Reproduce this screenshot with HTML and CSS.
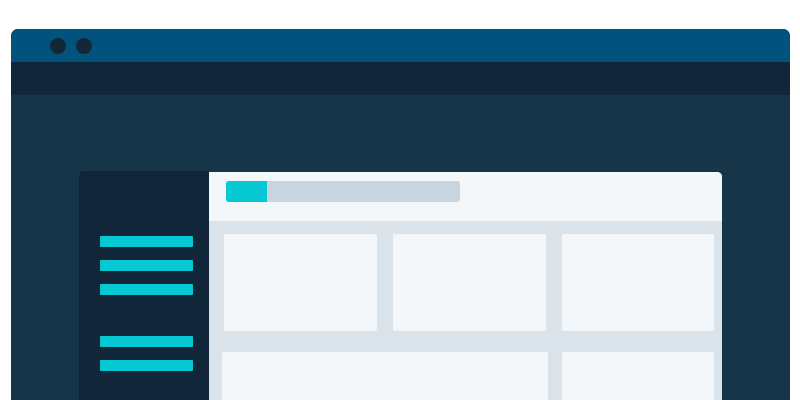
FILE: index.html
```html
<!DOCTYPE html>
<html>
<head>
<meta charset="utf-8">
<link rel="stylesheet" href="styles.css">
</head>
<body>
<div class="window">
  <div class="titlebar">
    <span class="dot"></span>
    <span class="dot"></span>
  </div>
  <div class="navbar"></div>
  <div class="stage">
    <div class="app">
      <aside class="sidebar">
        <div class="group">
          <span class="item"></span>
          <span class="item"></span>
          <span class="item"></span>
        </div>
        <div class="group">
          <span class="item"></span>
          <span class="item"></span>
        </div>
      </aside>
      <main class="content">
        <header class="header">
          <div class="search"><span class="search-fill"></span></div>
        </header>
        <section class="grid">
          <div class="card"></div>
          <div class="card"></div>
          <div class="card"></div>
          <div class="card wide"></div>
          <div class="card"></div>
        </section>
      </main>
    </div>
  </div>
</div>
</body>
</html>
```
FILE: styles.css
```css
* { box-sizing: border-box; }
html, body {
  margin: 0;
  padding: 0;
  height: 400px;
  background: #ffffff;
  font-family: "Liberation Sans", sans-serif;
  overflow: hidden;
}
.window {
  margin: 29px 0 0 11px;
  width: 779px;
  height: 371px;
  background: #163548;
  border-radius: 7px 7px 0 0;
  overflow: hidden;
}
.titlebar {
  height: 33px;
  background: #02527e;
  display: flex;
  align-items: center;
  gap: 10px;
  padding-left: 39px;
  padding-top: 1px;
}
.dot {
  width: 16px;
  height: 16px;
  border-radius: 50%;
  background: #132739;
}
.navbar {
  height: 33px;
  background: #12263a;
}
.stage {
  padding: 76px 0 0 68px;
}
.app {
  display: flex;
  width: 643px;
  height: 229px;
}
.sidebar {
  width: 130px;
  background: #12263a;
  border-radius: 5px 0 0 0;
  padding: 65px 0 0 21px;
  display: flex;
  flex-direction: column;
  gap: 41px;
}
.group {
  display: flex;
  flex-direction: column;
  gap: 13px;
}
.item {
  display: block;
  width: 93px;
  height: 11px;
  background: #05c8d2;
  border-radius: 1px;
}
.content {
  flex: 1;
  margin-top: 1px;
  background: #dbe3ea;
  border-radius: 0 5px 0 0;
  overflow: hidden;
}
.header {
  height: 49px;
  background: #f4f7fa;
  padding: 9px 0 0 17px;
}
.search {
  width: 234px;
  height: 21px;
  background: #c6d5df;
  border-radius: 3px;
  overflow: hidden;
  display: flex;
}
.search-fill {
  width: 41px;
  background: #05c8d2;
}
.grid {
  display: grid;
  grid-template-columns: 153px 153px 152px;
  grid-auto-rows: 97px;
  column-gap: 16px;
  row-gap: 21px;
  padding: 13px 9px 0 15px;
}
.card {
  background: #f4f7fa;
  border-radius: 2px;
}
.card.wide {
  grid-column: span 2;
  margin-left: -2px;
  margin-right: -2px;
}
```
